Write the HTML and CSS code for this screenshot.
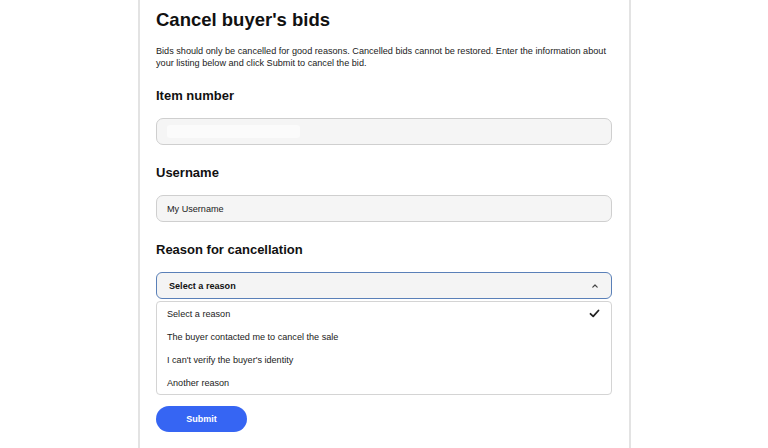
FILE: index.html
```html
<!DOCTYPE html>
<html>
<head>
<meta charset="utf-8">
<link rel="stylesheet" href="styles.css">
</head>
<body>
<div class="page">
  <main class="card">
    <h1 class="title">Cancel buyer's bids</h1>
    <p class="intro">Bids should only be cancelled for good reasons. Cancelled bids cannot be restored. Enter the information about your listing below and click Submit to cancel the bid.</p>

    <section class="field">
      <h2 class="label">Item number</h2>
      <div class="input"><span class="redacted"></span></div>
    </section>

    <section class="field">
      <h2 class="label">Username</h2>
      <div class="input"><span class="value">My Username</span></div>
    </section>

    <section class="field">
      <h2 class="label">Reason for cancellation</h2>
      <div class="select">
        <span class="select-text">Select a reason</span>
        <svg class="chev" width="8" height="6" viewBox="0 0 8 6"><path d="M1.8 4.2 L4 2 L6.2 4.2" fill="none" stroke="#444" stroke-width="1.2" stroke-linecap="round" stroke-linejoin="round"/></svg>
      </div>
      <ul class="listbox">
        <li class="option">Select a reason
          <svg class="check" width="11" height="9" viewBox="0 0 11 9"><path d="M1.5 4.8 L4.2 7.3 L9.5 1.5" fill="none" stroke="#222" stroke-width="1.8" stroke-linecap="round" stroke-linejoin="round"/></svg>
        </li>
        <li class="option">The buyer contacted me to cancel the sale</li>
        <li class="option">I can't verify the buyer's identity</li>
        <li class="option">Another reason</li>
      </ul>
    </section>

    <button class="submit">Submit</button>
  </main>
</div>
</body>
</html>
```
FILE: styles.css
```css
html, body {
  margin: 0;
  padding: 0;
  background: #ffffff;
  font-family: "Liberation Sans", Arial, sans-serif;
  color: #111;
}
.page {
  display: flex;
  justify-content: flex-start;
  padding-left: 138px;
}
.card {
  width: 456px;
  height: 448px;
  box-sizing: content-box;
  border-left: 2px solid #e3e3e3;
  border-right: 2px solid #e3e3e3;
  padding: 0 17px 0 16px;
}
.title {
  margin: 8px 0 0;
  font-size: 18.5px;
  line-height: 24px;
  font-weight: 700;
  color: #111;
}
.intro {
  margin: 13px 0 0;
  font-size: 9.15px;
  line-height: 12px;
  color: #222;
}
.field {
  margin-top: 19px;
}
.field + .field {
  margin-top: 20px;
}
.label {
  margin: 0;
  font-size: 13px;
  line-height: 16px;
  font-weight: 700;
  color: #111;
}
.input {
  margin-top: 14px;
  height: 25px;
  border: 1px solid #cfcfcf;
  border-radius: 7px;
  background: #f5f5f5;
  display: flex;
  align-items: center;
  padding: 0 10px;
}
.redacted {
  width: 133px;
  height: 13px;
  background: #fbfbfb;
  border-radius: 3px;
}
.value {
  font-size: 9.1px;
  color: #222;
}
.select {
  margin-top: 14px;
  height: 25px;
  border: 1.5px solid #5a80b8;
  border-radius: 6px;
  background: #f4f4f4;
  display: flex;
  align-items: center;
  justify-content: space-between;
  padding: 0 12px 0 12px;
}
.select-text {
  font-size: 9.1px;
  font-weight: 700;
  color: #111;
}
.chev {
  display: block;
}
.listbox {
  list-style: none;
  margin: 2px 0 0;
  padding: 0;
  border: 1px solid #d4d4d4;
  border-radius: 4px;
  background: #fff;
  display: flex;
  flex-direction: column;
}
.option {
  height: 23px;
  display: flex;
  align-items: center;
  justify-content: space-between;
  padding: 0 10px;
  font-size: 9.1px;
  color: #222;
}
.check {
  display: block;
  margin-right: 1px;
}
.submit {
  margin-top: 11px;
  width: 91px;
  height: 26px;
  border: none;
  border-radius: 13px;
  background: #3665f3;
  color: #fff;
  font-family: "Liberation Sans", Arial, sans-serif;
  font-size: 9px;
  font-weight: 700;
  cursor: pointer;
}
```
